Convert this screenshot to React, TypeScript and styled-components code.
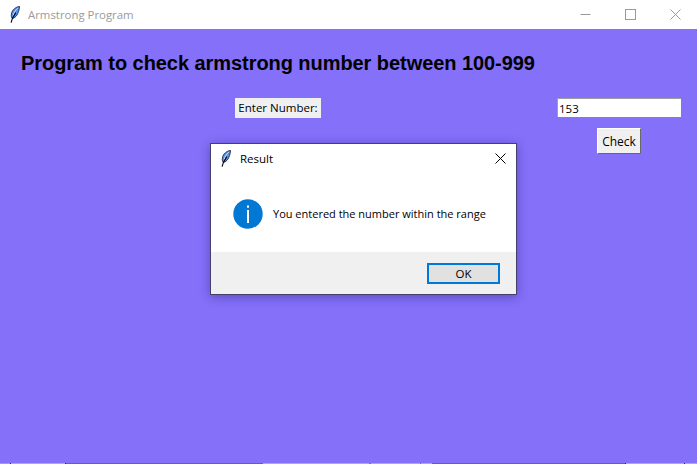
import React from "react";
import styled, { createGlobalStyle } from "styled-components";

const GlobalStyle = createGlobalStyle`
  html, body {
    margin: 0;
    padding: 0;
    background: #8570fa;
  }
  body {
    font-family: "Open Sans", "Noto Sans", sans-serif;
    font-size: 11.5px;
    color: #000;
  }
`;

const Window = styled.div`
  position: relative;
  width: 697px;
  height: 464px;
  overflow: hidden;
  display: flex;
  flex-direction: column;
  background: #8570fa;
`;

const TitleBar = styled.div`
  height: 29px;
  flex: none;
  display: flex;
  align-items: center;
  background: #fff;
  padding: 0 16px 0 10px;
`;

const TitleText = styled.span`
  margin-left: 8px;
  color: #9a9a9a;
  font-size: 11.4px;
`;

const WindowControls = styled.div`
  margin-left: auto;
  display: flex;
  align-items: center;
  gap: 34px;
`;

const Content = styled.main`
  flex: 1;
  display: flex;
  flex-direction: column;
  padding: 23px 16px 0 21px;
`;

const Heading = styled.h1`
  margin: 0;
  font-family: "Liberation Sans", Arial, sans-serif;
  font-size: 20px;
  font-weight: 700;
  line-height: 23px;
  letter-spacing: -0.06px;
`;

const FormRow = styled.div`
  display: flex;
  align-items: flex-start;
  margin-top: 23px;
  padding-left: 214px;
`;

const FieldLabel = styled.label`
  width: 86px;
  height: 20px;
  background: #f0f0f0;
  line-height: 20px;
  text-align: center;
  white-space: nowrap;
`;

const NumberInput = styled.input`
  box-sizing: border-box;
  width: 124px;
  height: 19px;
  margin-left: auto;
  padding: 0 1px;
  border: none;
  border-top: 1px solid #a0a0a0;
  border-left: 1px solid #a0a0a0;
  outline: none;
  background: #fff;
  font: inherit;
  color: #000;
`;

const ActionRow = styled.div`
  display: flex;
  justify-content: flex-end;
  margin-top: 10px;
  padding-right: 40px;
`;

const CheckButton = styled.button`
  box-sizing: border-box;
  width: 44px;
  height: 26px;
  padding: 0;
  background: #f0f0f0;
  border: 1px solid;
  border-color: #fff #696969 #696969 #fff;
  font: inherit;
  font-size: 12px;
  color: #000;
`;

const BottomStrip = styled.div`
  height: 1px;
  flex: none;
  display: flex;
`;

const StripSegment = styled.div<{ $color: string; $width: number }>`
  flex: none;
  width: ${(p) => p.$width}px;
  background: ${(p) => p.$color};
`;

const Dialog = styled.section`
  position: absolute;
  left: 210px;
  top: 143px;
  box-sizing: border-box;
  width: 307px;
  height: 152px;
  display: flex;
  flex-direction: column;
  background: #fff;
  border: 1px solid #44406b;
  box-shadow: 0 2px 10px rgba(40, 30, 110, 0.45);
`;

const DialogHeader = styled.header`
  height: 29px;
  flex: none;
  display: flex;
  align-items: center;
  padding-left: 10px;
`;

const DialogTitle = styled.span`
  margin-left: 9px;
`;

const DialogClose = styled.div`
  margin-left: auto;
  width: 31px;
  height: 29px;
  display: flex;
  align-items: center;
  justify-content: center;
`;

const DialogBody = styled.div`
  flex: 1;
  display: flex;
  align-items: center;
  gap: 10px;
  padding: 2px 0 0 22px;
  font-size: 11px;
`;

const DialogFooter = styled.footer`
  height: 42px;
  flex: none;
  display: flex;
  align-items: center;
  justify-content: flex-end;
  box-sizing: border-box;
  padding-right: 16px;
  background: #f0f0f0;
`;

const OkButton = styled.button`
  box-sizing: border-box;
  width: 73px;
  height: 21px;
  padding: 0;
  background: #e1e1e1;
  border: 2px solid #0078d7;
  font: inherit;
  color: #000;
`;

const stripSegments = [
  { color: "#a49cd0", width: 10 },
  { color: "#2b2850", width: 1 },
  { color: "#b0b0b0", width: 54 },
  { color: "#2b2850", width: 1 },
  { color: "#6a5ac0", width: 197 },
  { color: "#b0b0b0", width: 106 },
  { color: "#5f7fa8", width: 2 },
  { color: "#b0b0b0", width: 49 },
  { color: "#3f86b8", width: 1 },
  { color: "#b0b0b0", width: 11 },
  { color: "#6a5ac0", width: 193 },
  { color: "#2b2850", width: 1 },
  { color: "#b0b0b0", width: 58 },
  { color: "#2b2850", width: 1 },
  { color: "#b0b0b0", width: 12 },
];

const Feather = () => (
  <svg width="10" height="17" viewBox="0 0 10 17">
    <path d="M9.6 0.4C6 0.8 2 3.6 1.4 8 1.1 10 1.4 11.6 2.2 12.4 6 12 8.8 7.6 9.6 0.4Z" fill="#4f93ee" stroke="#141a2c" strokeWidth="0.8" />
    <path d="M7.8 2.2C5.6 4 4 6.4 3.2 9.4" fill="none" stroke="#d5e6fc" strokeWidth="0.9" />
    <path d="M5.8 6.6 2.4 12.4 1.1 16.6" fill="none" stroke="#000" strokeWidth="1.1" />
  </svg>
);

const InfoIcon = () => (
  <svg width="30" height="30" viewBox="0 0 30 30">
    <circle cx="15" cy="15" r="14.7" fill="#0078d4" />
    <rect x="14" y="6.5" width="2" height="2.2" fill="#fff" />
    <rect x="14" y="11" width="2" height="13" fill="#fff" />
  </svg>
);

const CloseIcon = ({ color }: { color: string }) => (
  <svg width="11" height="11" viewBox="0 0 11 11">
    <path d="M0.5 0.5 10.5 10.5M10.5 0.5 0.5 10.5" stroke={color} strokeWidth="1" fill="none" />
  </svg>
);

const App = () => {
  return (
    <Window>
      <GlobalStyle />
      <TitleBar>
        <Feather />
        <TitleText>Armstrong Program</TitleText>
        <WindowControls>
          <svg width="11" height="11" viewBox="0 0 11 11">
            <path d="M0.5 5.5H10.5" stroke="#9a9a9a" fill="none" />
          </svg>
          <svg width="11" height="11" viewBox="0 0 11 11">
            <rect x="0.5" y="0.5" width="10" height="10" stroke="#9a9a9a" fill="none" />
          </svg>
          <CloseIcon color="#9a9a9a" />
        </WindowControls>
      </TitleBar>

      <Content>
        <Heading>Program to check armstrong number between 100-999</Heading>
        <FormRow>
          <FieldLabel>Enter Number:</FieldLabel>
          <NumberInput defaultValue="153" />
        </FormRow>
        <ActionRow>
          <CheckButton>Check</CheckButton>
        </ActionRow>
      </Content>

      <BottomStrip>
        {stripSegments.map((s, i) => (
          <StripSegment key={i} $color={s.color} $width={s.width} />
        ))}
      </BottomStrip>

      <Dialog>
        <DialogHeader>
          <Feather />
          <DialogTitle>Result</DialogTitle>
          <DialogClose>
            <CloseIcon color="#000" />
          </DialogClose>
        </DialogHeader>
        <DialogBody>
          <InfoIcon />
          <span>You entered the number within the range</span>
        </DialogBody>
        <DialogFooter>
          <OkButton>OK</OkButton>
        </DialogFooter>
      </Dialog>
    </Window>
  );
};

export default App;
